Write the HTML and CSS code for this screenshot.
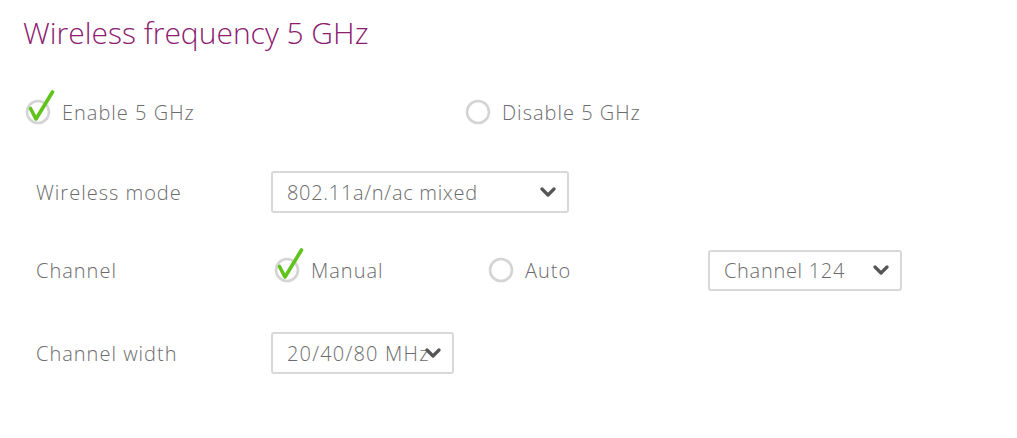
FILE: index.html
```html
<!DOCTYPE html>
<html lang="en">
<head>
    <meta charset="UTF-8">
    <title>Wireless frequency 5 GHz</title>
    <link rel="stylesheet" href="styles.css">
</head>
<body>
    <div class="panel">
        <h1 class="title">Wireless frequency 5 GHz</h1>

        <!-- Enable / disable -->
        <div class="toggle-row">
            <label class="radio radio-wide">
                <svg class="radio-icon" viewBox="0 -8 30 36" width="30" height="36">
                    <circle cx="12" cy="14" r="11" fill="none" stroke="#d4d4d4" stroke-width="2.6"/>
                    <path d="M4.5 10.5 L10 21 L26.5 -6" fill="none" stroke="#5fc31c" stroke-width="3.6" stroke-linecap="round" stroke-linejoin="round"/>
                </svg>
                <span>Enable 5 GHz</span>
            </label>
            <label class="radio">
                <svg class="radio-icon" viewBox="0 -8 30 36" width="30" height="36">
                    <circle cx="12" cy="14" r="11" fill="none" stroke="#d4d4d4" stroke-width="2.6"/>
                </svg>
                <span>Disable 5 GHz</span>
            </label>
        </div>

        <!-- Settings -->
        <div class="field field-mode">
            <div class="field-label">Wireless mode</div>
            <div class="select select-mode">
                <span>802.11a/n/ac mixed</span>
                <svg class="chevron" viewBox="0 0 16 10" width="16" height="10"><path d="M2 2 L8 8 L14 2" fill="none" stroke="#555" stroke-width="3.2" stroke-linecap="round" stroke-linejoin="round"/></svg>
            </div>
        </div>

        <div class="field field-channel">
            <div class="field-label">Channel</div>
            <label class="radio radio-manual">
                <svg class="radio-icon" viewBox="0 -8 30 36" width="30" height="36">
                    <circle cx="12" cy="14" r="11" fill="none" stroke="#d4d4d4" stroke-width="2.6"/>
                    <path d="M4.5 10.5 L10 21 L26.5 -6" fill="none" stroke="#5fc31c" stroke-width="3.6" stroke-linecap="round" stroke-linejoin="round"/>
                </svg>
                <span>Manual</span>
            </label>
            <label class="radio radio-auto">
                <svg class="radio-icon" viewBox="0 -8 30 36" width="30" height="36">
                    <circle cx="12" cy="14" r="11" fill="none" stroke="#d4d4d4" stroke-width="2.6"/>
                </svg>
                <span>Auto</span>
            </label>
            <div class="select select-channel">
                <span>Channel 124</span>
                <svg class="chevron" viewBox="0 0 16 10" width="16" height="10"><path d="M2 2 L8 8 L14 2" fill="none" stroke="#555" stroke-width="3.2" stroke-linecap="round" stroke-linejoin="round"/></svg>
            </div>
        </div>

        <div class="field field-width">
            <div class="field-label">Channel width</div>
            <div class="select select-width">
                <span>20/40/80 MHz</span>
                <svg class="chevron" viewBox="0 0 16 10" width="16" height="10"><path d="M2 2 L8 8 L14 2" fill="none" stroke="#555" stroke-width="3.2" stroke-linecap="round" stroke-linejoin="round"/></svg>
            </div>
        </div>
    </div>
</body>
</html>
```

FILE: styles.css
```css
* {
    margin: 0;
    padding: 0;
    box-sizing: border-box;
}

body {
    background-color: #ffffff;
    color: #6b6b6b;
    font-family: "Open Sans", Lato, sans-serif;
    font-weight: 300;
}

.panel {
    padding: 14px 0 0 23px;
}

/* Title */
.title {
    font-size: 30px;
    font-weight: 300;
    color: #8c1c70;
    line-height: 38px;
    margin-bottom: 40px;
}

/* Radios */
.toggle-row {
    display: flex;
    align-items: center;
    padding-left: 3px;
    height: 40px;
}

.radio {
    display: flex;
    align-items: center;
    gap: 6px;
    font-size: 20px;
    letter-spacing: 1px;
    color: #6b6b6b;
    cursor: pointer;
}

.radio-icon {
    overflow: visible;
    margin-top: -8px;
}

.radio-wide {
    width: 440px;
}

/* Fields */
.field {
    display: flex;
    align-items: center;
    padding-left: 13px;
    height: 42px;
}

.field-mode {
    margin-top: 39px;
}

.field-channel {
    margin-top: 36px;
}

.field-width {
    margin-top: 41px;
}

.field-label {
    width: 235px;
    font-size: 20px;
    letter-spacing: 1px;
    color: #6b6b6b;
}

.radio-manual {
    margin-left: 4px;
    width: 214px;
}

.radio-auto {
    width: 219px;
}

.select {
    position: relative;
    display: flex;
    align-items: center;
    height: 42px;
    border: 2px solid #d8d8d8;
    border-radius: 3px;
    padding: 0 14px;
    font-size: 20px;
    letter-spacing: 0.7px;
    color: #6b6b6b;
    white-space: nowrap;
}

.select-mode {
    width: 298px;
}

.select-channel {
    width: 194px;
    height: 41px;
}

.select-width {
    width: 183px;
    letter-spacing: 1.2px;
}

/* Chevron sits over the end of the text, like a native select arrow */
.chevron {
    position: absolute;
    right: 11px;
    top: 50%;
    margin-top: -5px;
}
```
